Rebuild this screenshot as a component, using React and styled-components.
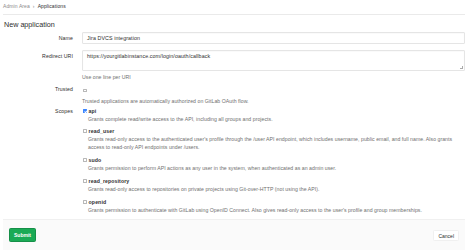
import styled, { createGlobalStyle } from "styled-components";

const Global = createGlobalStyle`
  html, body { margin: 0; padding: 0; background: #fff; }
  body {
    font-family: "Liberation Sans", Arial, sans-serif;
    color: #2e2e2e;
    -webkit-font-smoothing: antialiased;
  }
  * { box-sizing: border-box; }
`;

const Page = styled.div`
  width: 474px;
  padding: 0 9px 0 3px;
`;

const Crumbs = styled.div`
  display: flex;
  align-items: center;
  gap: 3px;
  height: 15px;
  font-size: 5px;
  letter-spacing: 0.1px;
  color: #707070;
  border-bottom: 1px solid #eaeaea;
  padding-bottom: 3px;
`;

const Crumb = styled.span`
  color: ${(p) => (p.current ? "#2e2e2e" : "#8a8a8a")};
`;

const Title = styled.h3`
  margin: 0;
  padding: 4px 0 0 1px;
  height: 17px;
  font-size: 7.2px;
  font-weight: 400;
  line-height: 12px;
`;

const Row = styled.div`
  display: flex;
  align-items: ${(p) => (p.top ? "flex-start" : "center")};
  margin-bottom: ${(p) => p.mb || 0}px;
`;

const Label = styled.label`
  width: 70px;
  flex: none;
  text-align: right;
  font-size: 5.2px;
  letter-spacing: 0.1px;
  font-weight: 400;
  padding-top: ${(p) => p.pt || 0}px;
  margin-right: 9px;
`;

const Control = styled.div`
  flex: 1;
  min-width: 0;
`;

const Input = styled.div`
  height: 12px;
  border: 1px solid #e5e5e5;
  border-radius: 1px;
  padding: 0 4px;
  font-size: 5.3px;
  letter-spacing: 0.1px;
  line-height: 10px;
  color: #2e2e2e;
  box-shadow: inset 0 0.5px 1px rgba(0, 0, 0, 0.04);
`;

const TextArea = styled(Input)`
  position: relative;
  height: 21px;
  line-height: 11px;
`;

const Grip = styled.span`
  position: absolute;
  right: 1px;
  bottom: 1px;
  width: 3px;
  height: 3px;
  border-right: 0.6px solid #aaa;
  border-bottom: 0.6px solid #aaa;
`;

const Help = styled.div`
  font-size: 5.2px;
  letter-spacing: 0.03px;
  color: #707070;
  line-height: 8px;
  padding-left: ${(p) => p.indent || 0}px;
  margin-top: ${(p) => p.mt || 0}px;
`;

const Box = styled.span`
  display: inline-block;
  flex: none;
  width: 3.6px;
  height: 3.6px;
  border: 0.5px solid ${(p) => (p.checked ? "#3b86ff" : "#b8b8b8")};
  border-radius: 0.6px;
  background: ${(p) => (p.checked ? "#3b86ff" : "#fff")};
  position: relative;
  margin-left: 1px;
  &::after {
    content: "";
    display: ${(p) => (p.checked ? "block" : "none")};
    position: absolute;
    left: 0.7px;
    top: 0.1px;
    width: 0.9px;
    height: 1.8px;
    border-right: 0.5px solid #fff;
    border-bottom: 0.5px solid #fff;
    transform: rotate(45deg);
  }
`;

const CheckLine = styled.div`
  display: flex;
  align-items: center;
  gap: 2px;
  height: ${(p) => p.h || 8}px;
`;

const ScopeName = styled.span`
  font-size: 5.2px;
  letter-spacing: 0.1px;
  font-weight: 700;
  color: #2e2e2e;
`;

const Scope = styled.div`
  margin-bottom: ${(p) => p.mb}px;
`;

const Footer = styled.div`
  display: flex;
  justify-content: space-between;
  align-items: center;
  margin-top: 5px;
  height: 31px;
  background: #fafafa;
  border-top: 1px solid #f0f0f0;
  padding: 0 6px;
`;

const Button = styled.button`
  font-family: inherit;
  font-size: 5px;
  height: ${(p) => (p.primary ? 14 : 11)}px;
  padding: 0 4px;
  border-radius: 1.5px;
  border: 0.6px solid ${(p) => (p.primary ? "#168f48" : "#f0f0f0")};
  background: ${(p) => (p.primary ? "#1aaa55" : "#fff")};
  color: ${(p) => (p.primary ? "#fff" : "#2e2e2e")};
  font-weight: ${(p) => (p.primary ? 700 : 400)};
  margin-top: ${(p) => (p.primary ? 0 : 1)}px;
`;

const scopes = [
  {
    name: "api",
    checked: true,
    desc: "Grants complete read/write access to the API, including all groups and projects.",
    mb: 4,
  },
  {
    name: "read_user",
    desc: "Grants read-only access to the authenticated user's profile through the /user API endpoint, which includes username, public email, and full name. Also grants access to read-only API endpoints under /users.",
    mb: 5,
  },
  {
    name: "sudo",
    desc: "Grants permission to perform API actions as any user in the system, when authenticated as an admin user.",
    mb: 5,
  },
  {
    name: "read_repository",
    desc: "Grants read-only access to repositories on private projects using Git-over-HTTP (not using the API).",
    mb: 5,
  },
  {
    name: "openid",
    desc: "Grants permission to authenticate with GitLab using OpenID Connect. Also gives read-only access to the user's profile and group memberships.",
    mb: 0,
  },
];

function App() {
  return (
    <Page>
      <Global />
      <Crumbs>
        <Crumb>Admin Area</Crumb>
        <Crumb>›</Crumb>
        <Crumb current>Applications</Crumb>
      </Crumbs>
      <Title>New application</Title>

      <Row mb={6}>
        <Label>Name</Label>
        <Control>
          <Input>Jira DVCS integration</Input>
        </Control>
      </Row>

      <Row top mb={3}>
        <Label pt={3}>Redirect URI</Label>
        <Control>
          <TextArea>
            https://yourgitlabinstance.com/login/oauth/callback
            <Grip />
          </TextArea>
          <Help mt={2}>Use one line per URI</Help>
        </Control>
      </Row>

      <Row top mb={2}>
        <Label pt={2}>Trusted</Label>
        <Control>
          <CheckLine h={13}>
            <Box />
          </CheckLine>
          <Help>Trusted applications are automatically authorized on GitLab OAuth flow.</Help>
        </Control>
      </Row>

      <Row top>
        <Label pt={1}>Scopes</Label>
        <Control>
          {scopes.map((s) => (
            <Scope key={s.name} mb={s.mb}>
              <CheckLine>
                <Box checked={s.checked} />
                <ScopeName>{s.name}</ScopeName>
              </CheckLine>
              <Help indent={6}>{s.desc}</Help>
            </Scope>
          ))}
        </Control>
      </Row>

      <Footer>
        <Button primary>Submit</Button>
        <Button>Cancel</Button>
      </Footer>
    </Page>
  );
}

export default App;
